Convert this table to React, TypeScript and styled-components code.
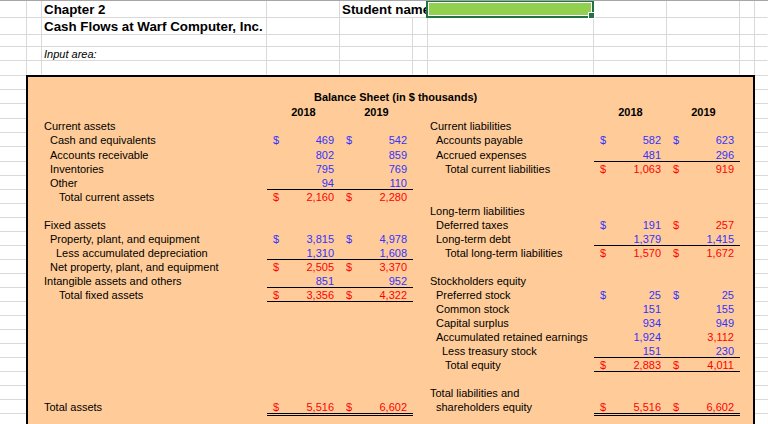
import React from 'react';
import styled, { createGlobalStyle } from 'styled-components';

const GRID = '#d9d9d9';
const FONT = '"Liberation Sans", Arial, Helvetica, sans-serif';
const BLUE = '#3333ff';
const RED = '#ff0000';

const Global = createGlobalStyle`
  html, body { margin: 0; padding: 0; background: #ffffff; }
  body { font-family: ${FONT}; overflow: hidden; }
`;

type Tone = 'blue' | 'red';
type Money = { v: string; t: Tone; d: boolean };
type Line = 'single' | 'double';
type Side = { label?: string; indent?: number; vals?: [Money, Money]; line?: Line };
type Row = { h: number; kind?: 'title' | 'years'; left?: Side; right?: Side };

const bl = (v: string, d = false): Money => ({ v, t: 'blue', d });
const rd = (v: string, d = true): Money => ({ v, t: 'red', d });

const ROWS: Row[] = [
  { h: 13 },
  { h: 14, kind: 'title' },
  { h: 15, kind: 'years' },
  { h: 14, left: { label: 'Current assets', indent: 0 }, right: { label: 'Current liabilities', indent: 0 } },
  {
    h: 14,
    left: { label: 'Cash and equivalents', indent: 1, vals: [bl('469', true), bl('542', true)] },
    right: { label: 'Accounts payable', indent: 1, vals: [bl('582', true), bl('623', true)] },
  },
  {
    h: 15,
    left: { label: 'Accounts receivable', indent: 1, vals: [bl('802'), bl('859')] },
    right: { label: 'Accrued expenses', indent: 1, vals: [bl('481'), bl('296')], line: 'single' },
  },
  {
    h: 14,
    left: { label: 'Inventories', indent: 1, vals: [bl('795'), bl('769')] },
    right: { label: 'Total current liabilities', indent: 3, vals: [rd('1,063'), rd('919')] },
  },
  { h: 14, left: { label: 'Other', indent: 1, vals: [bl('94'), bl('110')], line: 'single' } },
  { h: 14, left: { label: 'Total current assets', indent: 3, vals: [rd('2,160'), rd('2,280')] } },
  { h: 14, right: { label: 'Long-term liabilities', indent: 0 } },
  {
    h: 14,
    left: { label: 'Fixed assets', indent: 0 },
    right: { label: 'Deferred taxes', indent: 1, vals: [bl('191', true), rd('257')] },
  },
  {
    h: 14,
    left: { label: 'Property, plant, and equipment', indent: 1, vals: [bl('3,815', true), bl('4,978', true)] },
    right: { label: 'Long-term debt', indent: 1, vals: [bl('1,379'), bl('1,415')], line: 'single' },
  },
  {
    h: 14,
    left: { label: 'Less accumulated depreciation', indent: 2, vals: [bl('1,310'), bl('1,608')], line: 'single' },
    right: { label: 'Total long-term liabilities', indent: 3, vals: [rd('1,570'), rd('1,672')] },
  },
  { h: 14, left: { label: 'Net property, plant, and equipment', indent: 1, vals: [rd('2,505'), rd('3,370')] } },
  {
    h: 14,
    left: { label: 'Intangible assets and others', indent: 0, vals: [bl('851'), bl('952')], line: 'single' },
    right: { label: 'Stockholders equity', indent: 0 },
  },
  {
    h: 14,
    left: { label: 'Total fixed assets', indent: 3, vals: [rd('3,356'), rd('4,322')], line: 'single' },
    right: { label: 'Preferred stock', indent: 1, vals: [bl('25', true), bl('25', true)] },
  },
  { h: 14, right: { label: 'Common stock', indent: 1, vals: [bl('151'), bl('155')] } },
  { h: 14, right: { label: 'Capital surplus', indent: 1, vals: [bl('934'), bl('949')] } },
  { h: 14, right: { label: 'Accumulated retained earnings', indent: 1, vals: [bl('1,924'), rd('3,112', false)] } },
  { h: 14, right: { label: 'Less treasury stock', indent: 2, vals: [bl('151'), bl('230')], line: 'single' } },
  { h: 14, right: { label: 'Total equity', indent: 3, vals: [rd('2,883'), rd('4,011')], line: 'single' } },
  { h: 14 },
  { h: 14, right: { label: 'Total liabilities and', indent: 0 } },
  {
    h: 14,
    left: { label: 'Total assets', indent: 0, vals: [rd('5,516'), rd('6,602')], line: 'double' },
    right: { label: 'shareholders equity', indent: 1, vals: [rd('5,516'), rd('6,602')], line: 'double' },
  },
  { h: 14 },
];

const INDENT = [2, 8, 14, 17];

/* ---------- sheet frame ---------- */

const Sheet = styled.div`
  width: 768px;
  height: 424px;
  overflow: hidden;
  box-sizing: border-box;
  border-top: 1px solid #a6a6a6;
  display: flex;
  flex-direction: column;
  font-family: ${FONT};
  font-size: 11px;
  color: #000;
`;

const TopRow = styled.div<{ $h: number }>`
  display: grid;
  grid-template-columns: 27px 15px 225px 73px 73px 15px 166px 73px 73px 15px 13px;
  height: ${(p) => p.$h}px;
  flex: none;
`;

const Cell = styled.div<{ $noRight?: boolean; $noBottom?: boolean }>`
  box-sizing: border-box;
  min-width: 0;
  border-right: 1px solid ${(p) => (p.$noRight ? 'transparent' : GRID)};
  border-bottom: 1px solid ${(p) => (p.$noBottom ? 'transparent' : GRID)};
`;

const TextCell = styled(Cell)<{ $kind: 'title' | 'note'; $span?: number }>`
  grid-column: span ${(p) => p.$span ?? 1};
  display: flex;
  align-items: flex-end;
  padding-left: 2px;
  white-space: nowrap;
  overflow: hidden;
  font-size: ${(p) => (p.$kind === 'title' ? '13.33px' : '11px')};
  line-height: ${(p) => (p.$kind === 'title' ? '15px' : '12px')};
  font-weight: ${(p) => (p.$kind === 'title' ? 700 : 400)};
  font-style: ${(p) => (p.$kind === 'note' ? 'italic' : 'normal')};
`;

const NameInput = styled(Cell)`
  position: relative;
  background: #92d050;
`;

const SelectionFrame = styled.div`
  position: absolute;
  top: -1px;
  left: -2px;
  right: -1px;
  bottom: -1px;
  border: 2px solid #217346;
  box-shadow: inset 0 0 0 1px #ffffff;
  pointer-events: none;
`;

const FillHandle = styled.div`
  position: absolute;
  right: -3px;
  bottom: -3px;
  width: 5px;
  height: 5px;
  background: #217346;
  border: 1px solid #ffffff;
`;

/* ---------- input area ---------- */

const BoxArea = styled.div`
  display: flex;
  flex: 1;
  min-height: 0;
  align-items: stretch;
`;

const Gutter = styled.div<{ $w: number }>`
  width: ${(p) => p.$w}px;
  flex: none;
  border-top: 1px solid ${GRID};
  display: flex;
  flex-direction: column;
`;

const GutterLine = styled.div<{ $h: number }>`
  height: ${(p) => p.$h}px;
  flex: none;
  box-sizing: border-box;
  border-bottom: 1px solid ${GRID};
`;

const Panel = styled.div`
  width: 729px;
  flex: none;
  box-sizing: border-box;
  background: #ffcc99;
  border: 2px solid #000;
  border-bottom: none;
  display: flex;
  flex-direction: column;
`;

const PanelRow = styled.div<{ $h: number }>`
  display: grid;
  grid-template-columns: 14px 225px 73px 73px 15px 166px 73px 73px 13px;
  height: ${(p) => p.$h}px;
  flex: none;
`;

const Slot = styled.div<{ $line?: Line }>`
  box-sizing: border-box;
  min-width: 0;
  border-bottom: ${(p) =>
    p.$line === 'double' ? '3px double #000' : p.$line === 'single' ? '1px solid #000' : '1px solid transparent'};
  margin-bottom: ${(p) => (p.$line === 'double' ? '-2px' : '0')};
  line-height: 12px;
  white-space: nowrap;
`;

const Label = styled(Slot)<{ $indent: number }>`
  display: flex;
  align-items: flex-end;
  padding-left: ${(p) => p.$indent}px;
  color: #000;
`;

const Amount = styled(Slot)<{ $tone: Tone }>`
  display: flex;
  align-items: flex-end;
  justify-content: space-between;
  padding: 0 6px;
  color: ${(p) => (p.$tone === 'blue' ? BLUE : RED)};
`;

const Year = styled(Slot)`
  display: flex;
  align-items: flex-end;
  justify-content: center;
  font-weight: 700;
`;

const Title = styled(Slot)`
  grid-column: span 6;
  display: flex;
  align-items: flex-end;
  padding-left: 47px;
  font-weight: 700;
`;

function AmountCell({ m, line }: { m?: Money; line?: Line }) {
  if (!m) return <Slot $line={line} />;
  return (
    <Amount $tone={m.t} $line={line}>
      <span>{m.d ? '$' : ''}</span>
      <span>{m.v}</span>
    </Amount>
  );
}

function SideCells({ side }: { side?: Side }) {
  return (
    <>
      <Label $indent={INDENT[side?.indent ?? 0]}>{side?.label ?? ''}</Label>
      <AmountCell m={side?.vals?.[0]} line={side?.line} />
      <AmountCell m={side?.vals?.[1]} line={side?.line} />
    </>
  );
}

function BalanceRow({ row }: { row: Row }) {
  if (row.kind === 'title') {
    return (
      <PanelRow $h={row.h}>
        <Slot />
        <Slot />
        <Title>Balance Sheet (in $ thousands)</Title>
        <Slot />
      </PanelRow>
    );
  }
  if (row.kind === 'years') {
    return (
      <PanelRow $h={row.h}>
        <Slot />
        <Slot />
        <Year>2018</Year>
        <Year>2019</Year>
        <Slot />
        <Slot />
        <Year>2018</Year>
        <Year>2019</Year>
        <Slot />
      </PanelRow>
    );
  }
  return (
    <PanelRow $h={row.h}>
      <Slot />
      <SideCells side={row.left} />
      <Slot />
      <SideCells side={row.right} />
      <Slot />
    </PanelRow>
  );
}

function Blank({ n, last, noBottom }: { n: number; last?: boolean; noBottom?: boolean }) {
  return (
    <>
      {Array.from({ length: n }).map((_, i) => (
        <Cell key={i} $noRight={last && i === n - 1} $noBottom={noBottom} />
      ))}
    </>
  );
}

export default function App() {
  const gutterHeights = ROWS.map((r, i) => (i === 0 ? r.h + 1 : r.h));
  return (
    <>
      <Global />
      <Sheet>
        <TopRow $h={17}>
          <Blank n={2} />
          <TextCell $kind="title">Chapter 2</TextCell>
          <Cell />
          <TextCell $kind="title" $span={2} $noRight>
            Student name
          </TextCell>
          <NameInput>
            <SelectionFrame>
              <FillHandle />
            </SelectionFrame>
          </NameInput>
          <Blank n={4} last />
        </TopRow>
        <TopRow $h={17}>
          <Blank n={2} />
          <TextCell $kind="title">Cash Flows at Warf Computer, Inc.</TextCell>
          <Blank n={8} last />
        </TopRow>
        <TopRow $h={12}>
          <Blank n={11} last />
        </TopRow>
        <TopRow $h={14}>
          <Blank n={2} />
          <TextCell $kind="note">Input area:</TextCell>
          <Blank n={8} last />
        </TopRow>
        <TopRow $h={14}>
          <Blank n={11} last noBottom />
        </TopRow>
        <BoxArea>
          <Gutter $w={26}>
            {gutterHeights.map((h, i) => (
              <GutterLine key={i} $h={h} />
            ))}
          </Gutter>
          <Panel>
            {ROWS.map((row, i) => (
              <BalanceRow key={i} row={row} />
            ))}
          </Panel>
          <Gutter $w={13}>
            {gutterHeights.map((h, i) => (
              <GutterLine key={i} $h={h} />
            ))}
          </Gutter>
        </BoxArea>
      </Sheet>
    </>
  );
}
